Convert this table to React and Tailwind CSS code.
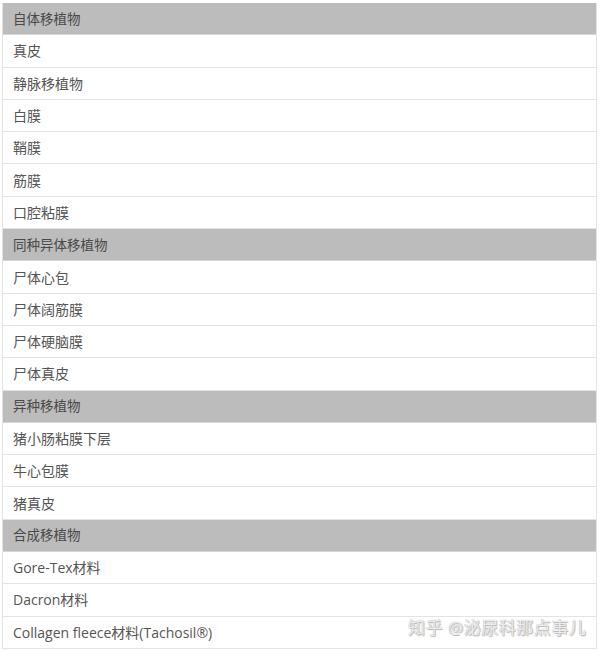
import React from "react";

const groups = [
  {
    title: "自体移植物",
    items: ["真皮", "静脉移植物", "白膜", "鞘膜", "筋膜", "口腔粘膜"],
  },
  {
    title: "同种异体移植物",
    items: ["尸体心包", "尸体阔筋膜", "尸体硬脑膜", "尸体真皮"],
  },
  {
    title: "异种移植物",
    items: ["猪小肠粘膜下层", "牛心包膜", "猪真皮"],
  },
  {
    title: "合成移植物",
    items: ["Gore-Tex材料", "Dacron材料", "Collagen fleece材料(Tachosil®)"],
  },
];

const font = {
  fontFamily: '"Open Sans", "Noto Sans CJK SC", sans-serif',
};

export default function App() {
  return (
    <div className="relative w-[600px] h-[650px] bg-white overflow-hidden" style={font}>
      <div className="pt-[3px] pl-[2px] pr-[3px]">
        <div className="border-l border-r border-[#e3e3e3]">
          {groups.map((g) => (
            <div key={g.title}>
              <div className="h-[32.3px] bg-[#bcbcbc] flex items-center pl-[10px] text-[13.5px] text-[#4a4a4a] border-b border-[#d6d6d6]">
                {g.title}
              </div>
              {g.items.map((item) => (
                <div
                  key={item}
                  className="h-[32.3px] flex items-center pl-[10px] text-[14px] text-[#555] border-b border-[#e3e3e3]"
                >
                  {item}
                </div>
              ))}
            </div>
          ))}
        </div>
      </div>
      {/* watermark */}
      <div
        className="absolute left-[408px] top-[615px] text-[17px] text-[#ececec] tracking-[0.5px]"
        style={{ textShadow: "0 0 1px #a0a0a0, 1px 1px 1px #b8b8b8" }}
      >
        知乎 @泌尿科那点事儿
      </div>
    </div>
  );
}
